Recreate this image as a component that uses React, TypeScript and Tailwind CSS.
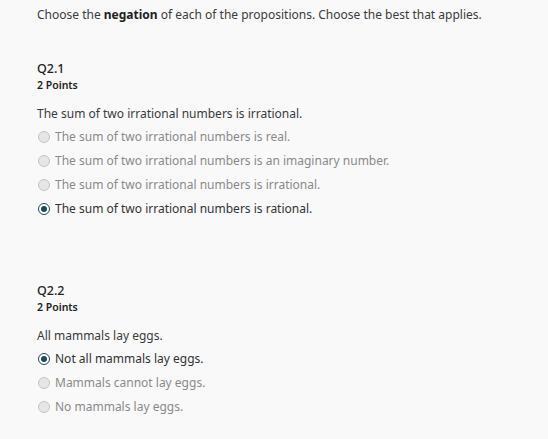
import React from 'react';

type Option = { text: string; checked?: boolean };

const questions: { id: string; prompt: string; options: Option[] }[] = [
  {
    id: 'Q2.1',
    prompt: 'The sum of two irrational numbers is irrational.',
    options: [
      { text: 'The sum of two irrational numbers is real.' },
      { text: 'The sum of two irrational numbers is an imaginary number.' },
      { text: 'The sum of two irrational numbers is irrational.' },
      { text: 'The sum of two irrational numbers is rational.', checked: true },
    ],
  },
  {
    id: 'Q2.2',
    prompt: 'All mammals lay eggs.',
    options: [
      { text: 'Not all mammals lay eggs.', checked: true },
      { text: 'Mammals cannot lay eggs.' },
      { text: 'No mammals lay eggs.' },
    ],
  },
];

function Radio({ checked }: { checked?: boolean }) {
  if (checked) {
    return (
      <span className="w-[12px] h-[12px] rounded-full border-[1.5px] border-[#1f4a55] bg-white flex items-center justify-center shrink-0">
        <span className="w-[6px] h-[6px] rounded-full bg-[#1f4a55]" />
      </span>
    );
  }
  return <span className="w-[12px] h-[12px] rounded-full border border-[#c4c4c4] bg-[#e6e6e6] shrink-0" />;
}

export default function App() {
  return (
    <div
      className="w-[548px] h-[439px] bg-[#f9f9f9] pl-[37px] pt-[6px] text-[12px] text-[#3b3b3b] overflow-hidden"
      style={{ fontFamily: '"Noto Sans", sans-serif' }}
    >
      <p className="leading-[18px]">
        Choose the <strong className="font-bold text-[#222]">negation</strong> of each of the propositions. Choose the best that applies.
      </p>

      {questions.map((q, i) => (
        <div key={q.id} className={i === 0 ? 'mt-[36px]' : 'mt-[61px]'}>
          <h3 className="leading-[18px] text-[12.5px] font-medium text-[#222]">{q.id}</h3>
          <div className="leading-[14px] text-[10.5px] font-semibold text-[#222]">2 Points</div>
          <p className="mt-[13px] leading-[18px]">{q.prompt}</p>
          <div className="mt-[2px]">
            {q.options.map((o) => (
              <label key={o.text} className="flex items-center gap-[5px] h-[24px] pl-[1px]">
                <Radio checked={o.checked} />
                <span className={o.checked ? 'text-[#333]' : 'text-[#8a8a8a]'}>{o.text}</span>
              </label>
            ))}
          </div>
        </div>
      ))}
    </div>
  );
}
